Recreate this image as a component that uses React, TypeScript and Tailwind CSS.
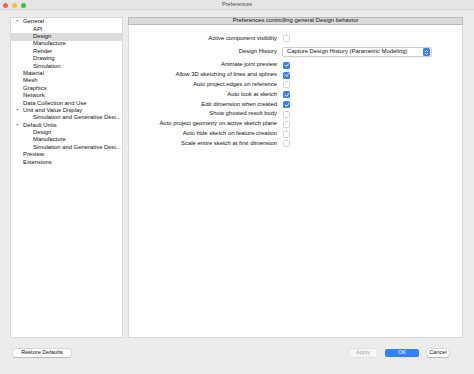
import React from "react";

const tree: { label: string; indent: number; arrow?: boolean; selected?: boolean }[] = [
  { label: "General", indent: 0, arrow: true },
  { label: "API", indent: 1 },
  { label: "Design", indent: 1, selected: true },
  { label: "Manufacture", indent: 1 },
  { label: "Render", indent: 1 },
  { label: "Drawing", indent: 1 },
  { label: "Simulation", indent: 1 },
  { label: "Material", indent: 0 },
  { label: "Mesh", indent: 0 },
  { label: "Graphics", indent: 0 },
  { label: "Network", indent: 0 },
  { label: "Data Collection and Use", indent: 0 },
  { label: "Unit and Value Display", indent: 0, arrow: true },
  { label: "Simulation and Generative Desi...", indent: 1 },
  { label: "Default Units", indent: 0, arrow: true },
  { label: "Design", indent: 1 },
  { label: "Manufacture", indent: 1 },
  { label: "Simulation and Generative Desi...", indent: 1 },
  { label: "Preview", indent: 0 },
  { label: "Extensions", indent: 0 },
];

const checks: { label: string; checked: boolean }[] = [
  { label: "Animate joint preview", checked: true },
  { label: "Allow 3D sketching of lines and splines", checked: true },
  { label: "Auto project edges on reference", checked: false },
  { label: "Auto look at sketch", checked: true },
  { label: "Edit dimension when created", checked: true },
  { label: "Show ghosted result body", checked: false },
  { label: "Auto project geometry on active sketch plane", checked: false },
  { label: "Auto hide sketch on feature creation", checked: false },
  { label: "Scale entire sketch at first dimension", checked: false },
];

function Checkbox({ checked }: { checked: boolean }) {
  if (checked) {
    return (
      <div className="w-[7px] h-[7px] rounded-[1.5px] bg-[#3b7ff0] flex items-center justify-center">
        <svg width="6" height="6" viewBox="0 0 10 10">
          <path d="M2 5.2 L4.2 7.4 L8 2.6" fill="none" stroke="white" strokeWidth="1.6" strokeLinecap="round" strokeLinejoin="round" />
        </svg>
      </div>
    );
  }
  return <div className="w-[7px] h-[7px] rounded-[1.5px] bg-white border border-[#d0d0d0]" />;
}

function Btn({ children, className }: { children: React.ReactNode; className: string }) {
  return (
    <div className={"h-[8px] rounded-[2px] flex items-center justify-center text-[5.6px] leading-none " + className}>
      {children}
    </div>
  );
}

export default function App() {
  return (
    <div
      className="w-[474px] h-[374px] bg-[#ececec] flex flex-col overflow-hidden text-[#111111]"
      style={{ fontFamily: '"Liberation Sans", Arial, sans-serif' }}
    >
      {/* title bar */}
      <div className="h-[10px] relative flex items-center justify-center bg-[#e6e6e6] border-b border-[#d6d6d6]">
        <div className="absolute left-[3px] top-[2.5px] flex gap-[4px]">
          <div className="w-[5px] h-[5px] rounded-full bg-[#fc5f57]" />
          <div className="w-[5px] h-[5px] rounded-full bg-[#fdbc2e]" />
          <div className="w-[5px] h-[5px] rounded-full bg-[#29c840]" />
        </div>
        <span className="text-[5.6px] text-[#4a4a4a]">Preferences</span>
      </div>

      <div className="flex px-[10px] pt-[7px] gap-[5px]">
        {/* left tree */}
        <div className="w-[113px] h-[321px] bg-white border border-[#d8d8d8] pt-[0.5px]">
          {tree.map((t, i) => (
            <div
              key={i}
              className={
                "h-[7.4px] flex items-center text-[5.9px] leading-none whitespace-nowrap " +
                (t.selected ? "bg-[#dcdcdc]" : "")
              }
            >
              <div className="w-[12px] flex justify-end pr-[4px] text-[#8a8a8a] text-[3.6px]">
                {t.arrow ? "▼" : ""}
              </div>
              <div className={t.indent ? "pl-[10px]" : ""}>{t.label}</div>
            </div>
          ))}
        </div>

        {/* right panel */}
        <div className="w-[335px] h-[321px] flex flex-col">
          <div className="h-[8px] bg-[#dadada] border border-[#b9b9b9] flex items-center justify-center text-[5.9px] leading-none">
            Preferences controlling general Design behavior
          </div>
          <div className="flex-1 bg-white border border-t-0 border-[#d8d8d8] pt-[9px]">
            <div className="h-[9.85px] flex items-center">
              <div className="w-[148px] text-right text-[5.9px] leading-none">Active component visibility</div>
              <div className="ml-[6px]"><Checkbox checked={false} /></div>
            </div>
            <div className="h-[16.4px] flex items-center">
              <div className="w-[148px] text-right text-[5.9px] leading-none">Design History</div>
              <div className="ml-[5px] w-[150px] h-[10px] bg-white border border-[#cfcfcf] rounded-[2px] flex items-center justify-between pl-[4px] pr-[1px] shadow-[0_0.5px_0.5px_rgba(0,0,0,0.1)]">
                <span className="text-[5.9px] leading-none">Capture Design History (Parametric Modeling)</span>
                <div className="w-[7px] h-[7.5px] rounded-[1.5px] bg-[#3b7ff0] flex items-center justify-center">
                  <svg width="5" height="7" viewBox="0 0 10 14">
                    <path d="M2.5 5.5 L5 3 L7.5 5.5 M2.5 8.5 L5 11 L7.5 8.5" fill="none" stroke="white" strokeWidth="1.5" strokeLinecap="round" strokeLinejoin="round" />
                  </svg>
                </div>
              </div>
            </div>
            {checks.map((c, i) => (
              <div key={i} className="h-[9.85px] flex items-center">
                <div className="w-[148px] text-right text-[5.9px] leading-none whitespace-nowrap">{c.label}</div>
                <div className="ml-[6px]"><Checkbox checked={c.checked} /></div>
              </div>
            ))}
          </div>
        </div>
      </div>

      {/* bottom buttons */}
      <div className="flex items-center px-[13px] mt-[11px]">
        <Btn className="w-[58px] bg-white shadow-[0_0_0_0.5px_rgba(0,0,0,0.15),0_0.5px_1px_rgba(0,0,0,0.15)]">Restore Defaults</Btn>
        <div className="flex-1" />
        <Btn className="w-[28px] bg-[#f6f6f6] text-[#a5a5a5] shadow-[0_0_0_0.5px_rgba(0,0,0,0.1)]">Apply</Btn>
        <Btn className="w-[34px] ml-[8px] bg-[#2f83f7] text-white">OK</Btn>
        <Btn className="w-[22px] ml-[8px] mr-[12px] bg-white shadow-[0_0_0_0.5px_rgba(0,0,0,0.15),0_0.5px_1px_rgba(0,0,0,0.15)]">Cancel</Btn>
      </div>
    </div>
  );
}
